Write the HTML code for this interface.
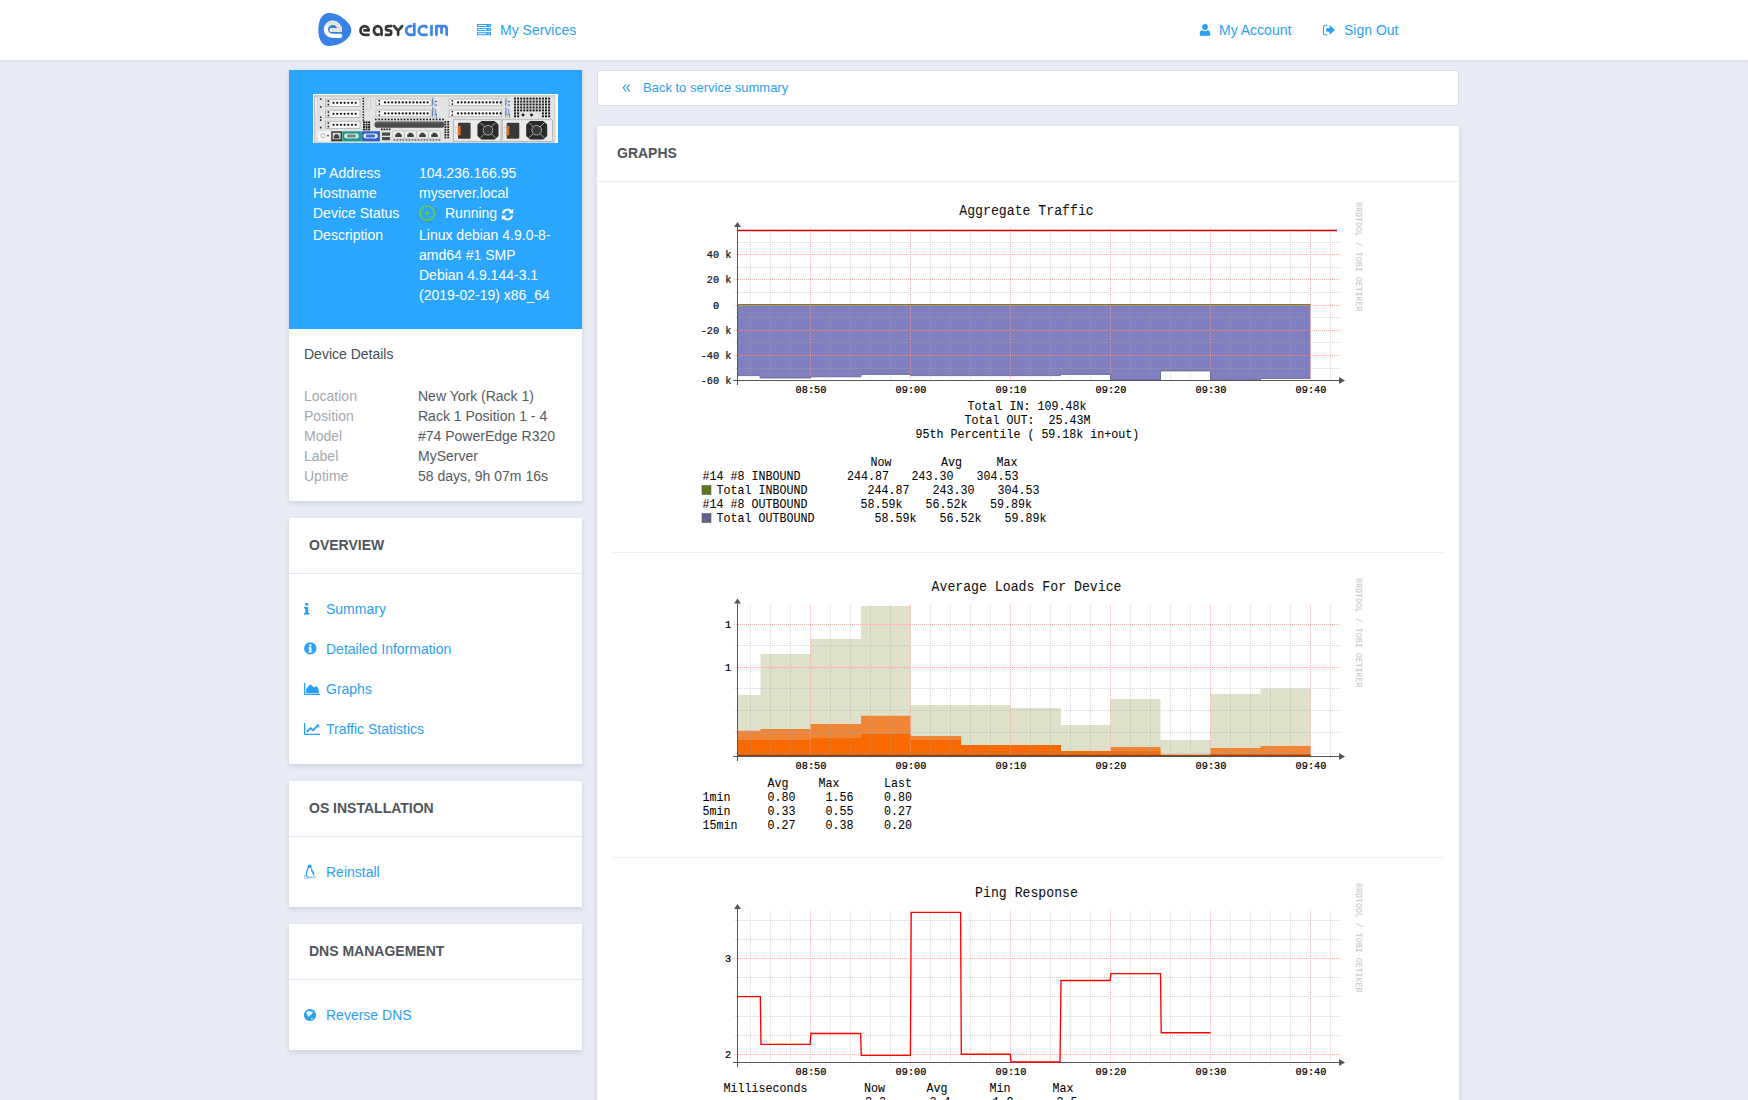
<!DOCTYPE html>
<html><head><meta charset="utf-8">
<style>
*{box-sizing:border-box;margin:0;padding:0}
html,body{width:1748px;height:1100px;overflow:hidden}
body{background:#e8ebf4;font-family:"Liberation Sans",sans-serif;font-size:14px;color:#555;position:relative}
.abs{position:absolute}
.t{position:absolute;white-space:nowrap;line-height:20px}
.hdr{position:absolute;left:0;top:0;width:1748px;height:61px;background:#fff;border-bottom:1px solid #dcdfe9;box-shadow:0 1px 2px rgba(40,50,90,.06)}
.nav{position:absolute;top:20px;font-size:14px;line-height:20px;color:#2b9ff6;white-space:nowrap}
.card{position:absolute;background:#fff;box-shadow:0 2px 5px rgba(40,50,100,.14)}
.blue{position:absolute;left:289px;top:70px;width:293px;height:259px;background:#2ba6ff;color:#fff}
.wl{color:#fff}
.ch{position:absolute;left:20px;font-weight:bold;font-size:14px;color:#50555c;line-height:20px;white-space:nowrap}
.dv{position:absolute;left:0;right:0;height:1px;background:#e4e8f0}
.lk{position:absolute;left:37px;color:#2b9ff6;font-size:14px;line-height:20px;white-space:nowrap}
.ic{position:absolute;left:15px}
.lbl{color:#a3a8b0}
.val{color:#555a60}
svg{position:absolute;overflow:visible}
</style></head><body>
<div class="hdr"></div>
<svg style="left:314px;top:10px" width="40" height="40" viewBox="0 0 40 40">
<path d="M15.5,3 C22.5,3 30,7.5 35,14 C38,18 38,22 35.5,26 C31,32.5 22.5,36 15,36 C9.5,36 6.5,32 5,26.5 C4,22 4,15.5 5.8,10.5 C7.5,5.5 11,3 15.5,3 Z" fill="#3881e5"/>
<path d="M17.5,20 H25.8 A7,7.3 0 0 0 18.8,12.7 A7,6.8 0 0 0 11.8,19.5 A7,6.3 0 0 0 18.8,25.8 H26.3" fill="none" stroke="#fff" stroke-width="4.2" stroke-linecap="round"/>
<path d="M17.5,20 H25.8 A7,7.3 0 0 0 18.8,12.7 A7,6.8 0 0 0 13.2,15.5" fill="none" stroke="#e2e2e2" stroke-width="4.2"/>
</svg>
<svg style="left:356px;top:18px" width="96" height="24" viewBox="0 0 96 24" fill="none" stroke-width="2.75" stroke-linecap="round" stroke-linejoin="round">
<g stroke="#383838">
<path d="M8.4,12.45 H12.7 A4.1,4.35 0 0 0 8.6,8.1 A4.1,4.35 0 0 0 4.5,12.45 A4.1,4.35 0 0 0 8.6,16.8 H12.5"/>
<path d="M22.8,16.5 A3.8,4.35 0 0 1 17.9,12.45 A3.8,4.35 0 0 1 21.7,8.1 A3.8,4.35 0 0 1 25.5,12.45 V16.8"/>
<path d="M35.2,8.1 H32.1 A2.1,2.175 0 0 0 32.1,12.45 H33.1 A2.1,2.175 0 0 1 33.1,16.8 H29.9"/>
<path d="M38.1,8.1 L42.1,12.8 V16.8 M46.1,8.1 L42.1,12.8"/>
</g>
<g stroke="#3a86e8">
<path d="M55.3,8.1 H54.3 A4.1,4.35 0 0 0 50.2,12.45 A4.1,4.35 0 0 0 54.3,16.8 H58.3 V6.2"/>
<path d="M70.4,9.3 A1.2,1.2 0 0 0 69.2,8.1 H66.9 A4.1,4.35 0 0 0 62.8,12.45 A4.1,4.35 0 0 0 66.9,16.8 H70.5"/>
<path d="M75.5,8.1 V16.8"/>
<path d="M80.4,16.8 V8.1 H88 A2.7,2.7 0 0 1 90.7,10.8 V16.8 M85.5,8.3 V14.8"/>
</g>
</svg>
<!-- services icon -->
<svg style="left:477px;top:24px" width="14" height="12" viewBox="0 0 14 12">
<g fill="none" stroke="#2b9ff6" stroke-width="1">
<rect x="0.5" y="0.5" width="13" height="2"/><rect x="0.5" y="4.6" width="13" height="2"/><rect x="0.5" y="8.7" width="13" height="2"/>
</g>
<g fill="#2b9ff6"><rect x="9.5" y="0.5" width="4" height="2"/><rect x="9.5" y="4.6" width="4" height="2"/><rect x="9.5" y="8.7" width="4" height="2"/></g>
<g fill="#fff"><rect x="11.6" y="1" width="1" height="1"/><rect x="11.6" y="5.1" width="1" height="1"/><rect x="11.6" y="9.2" width="1" height="1"/></g>
</svg>
<div class="nav" style="left:500px">My Services</div>
<!-- user icon -->
<svg style="left:1199px;top:24px" width="12" height="12" viewBox="0 0 12 12">
<circle cx="6" cy="3" r="2.9" fill="#2b9ff6"/>
<path d="M0.8,11.7 V9 C0.8,7.3 2,6.3 3.4,6.2 C4.2,6.9 5,7.2 6,7.2 C7,7.2 7.8,6.9 8.6,6.2 C10,6.3 11.2,7.3 11.2,9 V11.7 Z" fill="#2b9ff6"/>
</svg>
<div class="nav" style="left:1219px">My Account</div>
<!-- signout icon -->
<svg style="left:1322px;top:24px" width="14" height="12" viewBox="0 0 14 12">
<path d="M5.2,1.2 H3 C2,1.2 1.5,1.8 1.5,2.8 V9.2 C1.5,10.2 2,10.8 3,10.8 H5.2" fill="none" stroke="#2b9ff6" stroke-width="1.1"/>
<path d="M4.2,4.2 H7.6 V1 L12.9,6 L7.6,11 V7.8 H4.2 Z" fill="#2b9ff6"/>
</svg>
<div class="nav" style="left:1344px">Sign Out</div>
<div class="blue" style="box-shadow:0 2px 5px rgba(40,50,100,.14),0 0 1px rgba(40,50,90,.12)"></div>
<!-- server image -->
<svg style="left:313px;top:94px" width="245" height="49" viewBox="0 0 245 49">
<rect x="0" y="0" width="245" height="49" fill="#fff"/>
<rect x="1.5" y="1.2" width="240.5" height="47" fill="#e3e3e3" stroke="#b0b0b0" stroke-width="0.6"/>
<rect x="1.5" y="1.2" width="240.5" height="1.8" fill="#d0d0d0"/>
<rect x="2" y="3" width="2.5" height="18" fill="#f0f0f0" stroke="#bbb" stroke-width="0.4"/>
<rect x="6.9" y="4.2" width="1.6" height="1.6" fill="#222"/>
<rect x="6.9" y="12.2" width="1.6" height="1.6" fill="#222"/>
<rect x="6.9" y="22.5" width="1.6" height="1.6" fill="#222"/>
<rect x="6.9" y="25.3" width="1.6" height="1.6" fill="#222"/>
<rect x="6.9" y="32.8" width="1.6" height="1.6" fill="#222"/>
<rect x="12.5" y="5.2" width="34.5" height="7.3" fill="#f7f7f7" stroke="#9a9a9a" stroke-width="0.6"/>
<rect x="13" y="5.7" width="4.5" height="6.3" fill="#e0e0e0"/>
<circle cx="20.5" cy="8.85" r="1.1" fill="#151515"/>
<circle cx="24.2" cy="8.85" r="1.1" fill="#151515"/>
<circle cx="27.9" cy="8.85" r="1.1" fill="#151515"/>
<circle cx="31.6" cy="8.85" r="1.1" fill="#151515"/>
<circle cx="35.3" cy="8.85" r="1.1" fill="#151515"/>
<circle cx="39.0" cy="8.85" r="1.1" fill="#151515"/>
<circle cx="42.7" cy="8.85" r="1.1" fill="#151515"/>
<rect x="14.6" y="6.3" width="1.5" height="1.5" fill="#151515"/><rect x="14.6" y="9.8" width="1.5" height="1.5" fill="#151515"/>
<rect x="12.5" y="16.2" width="34.5" height="7.3" fill="#f7f7f7" stroke="#9a9a9a" stroke-width="0.6"/>
<rect x="13" y="16.7" width="4.5" height="6.3" fill="#e0e0e0"/>
<circle cx="20.5" cy="19.85" r="1.1" fill="#151515"/>
<circle cx="24.2" cy="19.85" r="1.1" fill="#151515"/>
<circle cx="27.9" cy="19.85" r="1.1" fill="#151515"/>
<circle cx="31.6" cy="19.85" r="1.1" fill="#151515"/>
<circle cx="35.3" cy="19.85" r="1.1" fill="#151515"/>
<circle cx="39.0" cy="19.85" r="1.1" fill="#151515"/>
<circle cx="42.7" cy="19.85" r="1.1" fill="#151515"/>
<rect x="14.6" y="17.3" width="1.5" height="1.5" fill="#151515"/><rect x="14.6" y="20.8" width="1.5" height="1.5" fill="#151515"/>
<rect x="12.5" y="27.2" width="34.5" height="7.3" fill="#f7f7f7" stroke="#9a9a9a" stroke-width="0.6"/>
<rect x="13" y="27.7" width="4.5" height="6.3" fill="#e0e0e0"/>
<circle cx="20.5" cy="30.85" r="1.1" fill="#151515"/>
<circle cx="24.2" cy="30.85" r="1.1" fill="#151515"/>
<circle cx="27.9" cy="30.85" r="1.1" fill="#151515"/>
<circle cx="31.6" cy="30.85" r="1.1" fill="#151515"/>
<circle cx="35.3" cy="30.85" r="1.1" fill="#151515"/>
<circle cx="39.0" cy="30.85" r="1.1" fill="#151515"/>
<circle cx="42.7" cy="30.85" r="1.1" fill="#151515"/>
<rect x="14.6" y="28.3" width="1.5" height="1.5" fill="#151515"/><rect x="14.6" y="31.8" width="1.5" height="1.5" fill="#151515"/>
<rect x="49.6" y="3.8" width="1.5" height="1.5" fill="#1a1a1a"/>
<rect x="49.6" y="6.5" width="1.5" height="1.5" fill="#1a1a1a"/>
<rect x="49.6" y="9.2" width="1.5" height="1.5" fill="#1a1a1a"/>
<rect x="49.6" y="11.9" width="1.5" height="1.5" fill="#1a1a1a"/>
<rect x="49.6" y="14.6" width="1.5" height="1.5" fill="#1a1a1a"/>
<rect x="49.6" y="17.3" width="1.5" height="1.5" fill="#1a1a1a"/>
<rect x="49.6" y="20.0" width="1.5" height="1.5" fill="#1a1a1a"/>
<rect x="49.6" y="22.7" width="1.5" height="1.5" fill="#1a1a1a"/>
<rect x="49.6" y="25.4" width="1.5" height="1.5" fill="#1a1a1a"/>
<rect x="50.0" y="27.3" width="1.9" height="1.9" fill="#1a1a1a"/>
<rect x="52.6" y="27.3" width="1.9" height="1.9" fill="#1a1a1a"/>
<rect x="55.2" y="27.3" width="1.9" height="1.9" fill="#1a1a1a"/>
<rect x="50.0" y="29.7" width="1.9" height="1.9" fill="#1a1a1a"/>
<rect x="52.6" y="29.7" width="1.9" height="1.9" fill="#1a1a1a"/>
<rect x="55.2" y="29.7" width="1.9" height="1.9" fill="#1a1a1a"/>
<rect x="50.0" y="32.1" width="1.9" height="1.9" fill="#1a1a1a"/>
<rect x="52.6" y="32.1" width="1.9" height="1.9" fill="#1a1a1a"/>
<rect x="55.2" y="32.1" width="1.9" height="1.9" fill="#1a1a1a"/>
<rect x="50.0" y="34.5" width="1.9" height="1.9" fill="#1a1a1a"/>
<rect x="52.6" y="34.5" width="1.9" height="1.9" fill="#1a1a1a"/>
<rect x="55.2" y="34.5" width="1.9" height="1.9" fill="#1a1a1a"/>
<rect x="53.5" y="3.2" width="4" height="12" fill="none" stroke="#bdbdbd" stroke-width="0.5"/>
<rect x="63.0" y="5.0" width="55.0" height="6.8" fill="#f7f7f7" stroke="#9a9a9a" stroke-width="0.6"/>
<rect x="65.6" y="6.0" width="1.5" height="1.5" fill="#151515"/><rect x="65.6" y="9.3" width="1.5" height="1.5" fill="#151515"/>
<circle cx="72.0" cy="8.40" r="1.1" fill="#151515"/>
<circle cx="75.5" cy="8.40" r="1.1" fill="#151515"/>
<circle cx="79.1" cy="8.40" r="1.1" fill="#151515"/>
<circle cx="82.7" cy="8.40" r="1.1" fill="#151515"/>
<circle cx="86.2" cy="8.40" r="1.1" fill="#151515"/>
<circle cx="89.8" cy="8.40" r="1.1" fill="#151515"/>
<circle cx="93.3" cy="8.40" r="1.1" fill="#151515"/>
<circle cx="96.8" cy="8.40" r="1.1" fill="#151515"/>
<circle cx="100.4" cy="8.40" r="1.1" fill="#151515"/>
<circle cx="104.0" cy="8.40" r="1.1" fill="#151515"/>
<circle cx="107.5" cy="8.40" r="1.1" fill="#151515"/>
<circle cx="111.0" cy="8.40" r="1.1" fill="#151515"/>
<circle cx="114.6" cy="8.40" r="1.1" fill="#151515"/>
<rect x="63.0" y="16.0" width="55.0" height="6.8" fill="#f7f7f7" stroke="#9a9a9a" stroke-width="0.6"/>
<rect x="65.6" y="17.0" width="1.5" height="1.5" fill="#151515"/><rect x="65.6" y="20.3" width="1.5" height="1.5" fill="#151515"/>
<circle cx="72.0" cy="19.40" r="1.1" fill="#151515"/>
<circle cx="75.5" cy="19.40" r="1.1" fill="#151515"/>
<circle cx="79.1" cy="19.40" r="1.1" fill="#151515"/>
<circle cx="82.7" cy="19.40" r="1.1" fill="#151515"/>
<circle cx="86.2" cy="19.40" r="1.1" fill="#151515"/>
<circle cx="89.8" cy="19.40" r="1.1" fill="#151515"/>
<circle cx="93.3" cy="19.40" r="1.1" fill="#151515"/>
<circle cx="96.8" cy="19.40" r="1.1" fill="#151515"/>
<circle cx="100.4" cy="19.40" r="1.1" fill="#151515"/>
<circle cx="104.0" cy="19.40" r="1.1" fill="#151515"/>
<circle cx="107.5" cy="19.40" r="1.1" fill="#151515"/>
<circle cx="111.0" cy="19.40" r="1.1" fill="#151515"/>
<circle cx="114.6" cy="19.40" r="1.1" fill="#151515"/>
<rect x="136.0" y="5.0" width="52.5" height="6.8" fill="#f7f7f7" stroke="#9a9a9a" stroke-width="0.6"/>
<rect x="138.6" y="6.0" width="1.5" height="1.5" fill="#151515"/><rect x="138.6" y="9.3" width="1.5" height="1.5" fill="#151515"/>
<circle cx="145.0" cy="8.40" r="1.1" fill="#151515"/>
<circle cx="148.6" cy="8.40" r="1.1" fill="#151515"/>
<circle cx="152.1" cy="8.40" r="1.1" fill="#151515"/>
<circle cx="155.7" cy="8.40" r="1.1" fill="#151515"/>
<circle cx="159.2" cy="8.40" r="1.1" fill="#151515"/>
<circle cx="162.8" cy="8.40" r="1.1" fill="#151515"/>
<circle cx="166.3" cy="8.40" r="1.1" fill="#151515"/>
<circle cx="169.8" cy="8.40" r="1.1" fill="#151515"/>
<circle cx="173.4" cy="8.40" r="1.1" fill="#151515"/>
<circle cx="176.9" cy="8.40" r="1.1" fill="#151515"/>
<circle cx="180.5" cy="8.40" r="1.1" fill="#151515"/>
<circle cx="184.1" cy="8.40" r="1.1" fill="#151515"/>
<circle cx="187.6" cy="8.40" r="1.1" fill="#151515"/>
<rect x="136.0" y="16.0" width="52.5" height="6.8" fill="#f7f7f7" stroke="#9a9a9a" stroke-width="0.6"/>
<rect x="138.6" y="17.0" width="1.5" height="1.5" fill="#151515"/><rect x="138.6" y="20.3" width="1.5" height="1.5" fill="#151515"/>
<circle cx="145.0" cy="19.40" r="1.1" fill="#151515"/>
<circle cx="148.6" cy="19.40" r="1.1" fill="#151515"/>
<circle cx="152.1" cy="19.40" r="1.1" fill="#151515"/>
<circle cx="155.7" cy="19.40" r="1.1" fill="#151515"/>
<circle cx="159.2" cy="19.40" r="1.1" fill="#151515"/>
<circle cx="162.8" cy="19.40" r="1.1" fill="#151515"/>
<circle cx="166.3" cy="19.40" r="1.1" fill="#151515"/>
<circle cx="169.8" cy="19.40" r="1.1" fill="#151515"/>
<circle cx="173.4" cy="19.40" r="1.1" fill="#151515"/>
<circle cx="176.9" cy="19.40" r="1.1" fill="#151515"/>
<circle cx="180.5" cy="19.40" r="1.1" fill="#151515"/>
<circle cx="184.1" cy="19.40" r="1.1" fill="#151515"/>
<circle cx="187.6" cy="19.40" r="1.1" fill="#151515"/>
<rect x="119.2" y="3.5" width="2.2" height="20.5" fill="#f2f2f2" stroke="#aaa" stroke-width="0.4"/>
<rect x="119.4" y="4.5" width="0.9" height="7" fill="#2a55b0"/><rect x="119.4" y="13.5" width="0.9" height="9" fill="#2a55b0"/>
<rect x="122.2" y="7" width="1.6" height="1.2" fill="#2a55b0"/><rect x="122.2" y="10.5" width="1.6" height="1.2" fill="#2a55b0"/><rect x="122.2" y="20" width="1.6" height="1.2" fill="#2a55b0"/>
<path d="M122.5,15 L123.5,24" stroke="#4a88d8" stroke-width="0.9"/>
<rect x="192.3" y="3.5" width="2.2" height="20.5" fill="#f2f2f2" stroke="#aaa" stroke-width="0.4"/>
<rect x="192.5" y="4.5" width="0.9" height="7" fill="#2a55b0"/><rect x="192.5" y="13.5" width="0.9" height="9" fill="#2a55b0"/>
<rect x="195.3" y="7" width="1.6" height="1.2" fill="#2a55b0"/><rect x="195.3" y="10.5" width="1.6" height="1.2" fill="#2a55b0"/><rect x="195.3" y="20" width="1.6" height="1.2" fill="#2a55b0"/>
<path d="M195.6,15 L196.6,24" stroke="#4a88d8" stroke-width="0.9"/>
<rect x="201.0" y="3.6" width="2" height="2" fill="#1c1c1c"/>
<rect x="204.1" y="3.6" width="2" height="2" fill="#1c1c1c"/>
<rect x="207.2" y="3.6" width="2" height="2" fill="#1c1c1c"/>
<rect x="210.3" y="3.6" width="2" height="2" fill="#1c1c1c"/>
<rect x="213.4" y="3.6" width="2" height="2" fill="#1c1c1c"/>
<rect x="216.5" y="3.6" width="2" height="2" fill="#1c1c1c"/>
<rect x="219.6" y="3.6" width="2" height="2" fill="#1c1c1c"/>
<rect x="222.7" y="3.6" width="2" height="2" fill="#1c1c1c"/>
<rect x="225.8" y="3.6" width="2" height="2" fill="#1c1c1c"/>
<rect x="228.9" y="3.6" width="2" height="2" fill="#1c1c1c"/>
<rect x="232.0" y="3.6" width="2" height="2" fill="#1c1c1c"/>
<rect x="235.1" y="3.6" width="2" height="2" fill="#1c1c1c"/>
<rect x="201.0" y="6.6" width="2" height="2" fill="#1c1c1c"/>
<rect x="204.1" y="6.6" width="2" height="2" fill="#1c1c1c"/>
<rect x="207.2" y="6.6" width="2" height="2" fill="#1c1c1c"/>
<rect x="210.3" y="6.6" width="2" height="2" fill="#1c1c1c"/>
<rect x="213.4" y="6.6" width="2" height="2" fill="#1c1c1c"/>
<rect x="216.5" y="6.6" width="2" height="2" fill="#1c1c1c"/>
<rect x="219.6" y="6.6" width="2" height="2" fill="#1c1c1c"/>
<rect x="222.7" y="6.6" width="2" height="2" fill="#1c1c1c"/>
<rect x="225.8" y="6.6" width="2" height="2" fill="#1c1c1c"/>
<rect x="228.9" y="6.6" width="2" height="2" fill="#1c1c1c"/>
<rect x="232.0" y="6.6" width="2" height="2" fill="#1c1c1c"/>
<rect x="235.1" y="6.6" width="2" height="2" fill="#1c1c1c"/>
<rect x="201.0" y="9.5" width="2" height="2" fill="#1c1c1c"/>
<rect x="204.1" y="9.5" width="2" height="2" fill="#1c1c1c"/>
<rect x="207.2" y="9.5" width="2" height="2" fill="#1c1c1c"/>
<rect x="210.3" y="9.5" width="2" height="2" fill="#1c1c1c"/>
<rect x="213.4" y="9.5" width="2" height="2" fill="#1c1c1c"/>
<rect x="216.5" y="9.5" width="2" height="2" fill="#1c1c1c"/>
<rect x="219.6" y="9.5" width="2" height="2" fill="#1c1c1c"/>
<rect x="222.7" y="9.5" width="2" height="2" fill="#1c1c1c"/>
<rect x="225.8" y="9.5" width="2" height="2" fill="#1c1c1c"/>
<rect x="228.9" y="9.5" width="2" height="2" fill="#1c1c1c"/>
<rect x="232.0" y="9.5" width="2" height="2" fill="#1c1c1c"/>
<rect x="235.1" y="9.5" width="2" height="2" fill="#1c1c1c"/>
<rect x="201.0" y="12.5" width="2" height="2" fill="#1c1c1c"/>
<rect x="204.1" y="12.5" width="2" height="2" fill="#1c1c1c"/>
<rect x="207.2" y="12.5" width="2" height="2" fill="#1c1c1c"/>
<rect x="210.3" y="12.5" width="2" height="2" fill="#1c1c1c"/>
<rect x="213.4" y="12.5" width="2" height="2" fill="#1c1c1c"/>
<rect x="216.5" y="12.5" width="2" height="2" fill="#1c1c1c"/>
<rect x="219.6" y="12.5" width="2" height="2" fill="#1c1c1c"/>
<rect x="222.7" y="12.5" width="2" height="2" fill="#1c1c1c"/>
<rect x="225.8" y="12.5" width="2" height="2" fill="#1c1c1c"/>
<rect x="228.9" y="12.5" width="2" height="2" fill="#1c1c1c"/>
<rect x="232.0" y="12.5" width="2" height="2" fill="#1c1c1c"/>
<rect x="235.1" y="12.5" width="2" height="2" fill="#1c1c1c"/>
<rect x="201.0" y="15.4" width="2" height="2" fill="#1c1c1c"/>
<rect x="204.1" y="15.4" width="2" height="2" fill="#1c1c1c"/>
<rect x="207.2" y="15.4" width="2" height="2" fill="#1c1c1c"/>
<rect x="210.3" y="15.4" width="2" height="2" fill="#1c1c1c"/>
<rect x="213.4" y="15.4" width="2" height="2" fill="#1c1c1c"/>
<rect x="216.5" y="15.4" width="2" height="2" fill="#1c1c1c"/>
<rect x="219.6" y="15.4" width="2" height="2" fill="#1c1c1c"/>
<rect x="222.7" y="15.4" width="2" height="2" fill="#1c1c1c"/>
<rect x="225.8" y="15.4" width="2" height="2" fill="#1c1c1c"/>
<rect x="228.9" y="15.4" width="2" height="2" fill="#1c1c1c"/>
<rect x="232.0" y="15.4" width="2" height="2" fill="#1c1c1c"/>
<rect x="235.1" y="15.4" width="2" height="2" fill="#1c1c1c"/>
<rect x="201.0" y="18.4" width="2" height="2" fill="#1c1c1c"/>
<rect x="204.1" y="18.4" width="2" height="2" fill="#1c1c1c"/>
<rect x="228.9" y="18.4" width="2" height="2" fill="#1c1c1c"/>
<rect x="232.0" y="18.4" width="2" height="2" fill="#1c1c1c"/>
<rect x="235.1" y="18.4" width="2" height="2" fill="#1c1c1c"/>
<rect x="201.0" y="21.3" width="2" height="2" fill="#1c1c1c"/>
<rect x="204.1" y="21.3" width="2" height="2" fill="#1c1c1c"/>
<rect x="228.9" y="21.3" width="2" height="2" fill="#1c1c1c"/>
<rect x="232.0" y="21.3" width="2" height="2" fill="#1c1c1c"/>
<rect x="235.1" y="21.3" width="2" height="2" fill="#1c1c1c"/>
<circle cx="210" cy="21" r="1.4" fill="#1c1c1c"/><circle cx="218.5" cy="21" r="1.4" fill="#1c1c1c"/>
<rect x="62.0" y="24.6" width="1.7" height="1.7" fill="#1c1c1c"/>
<rect x="65.2" y="24.6" width="1.7" height="1.7" fill="#1c1c1c"/>
<rect x="68.4" y="24.6" width="1.7" height="1.7" fill="#1c1c1c"/>
<rect x="71.6" y="24.6" width="1.7" height="1.7" fill="#1c1c1c"/>
<rect x="74.8" y="24.6" width="1.7" height="1.7" fill="#1c1c1c"/>
<rect x="78.0" y="24.6" width="1.7" height="1.7" fill="#1c1c1c"/>
<rect x="81.2" y="24.6" width="1.7" height="1.7" fill="#1c1c1c"/>
<rect x="84.4" y="24.6" width="1.7" height="1.7" fill="#1c1c1c"/>
<rect x="87.6" y="24.6" width="1.7" height="1.7" fill="#1c1c1c"/>
<rect x="90.8" y="24.6" width="1.7" height="1.7" fill="#1c1c1c"/>
<rect x="94.0" y="24.6" width="1.7" height="1.7" fill="#1c1c1c"/>
<rect x="97.2" y="24.6" width="1.7" height="1.7" fill="#1c1c1c"/>
<rect x="100.4" y="24.6" width="1.7" height="1.7" fill="#1c1c1c"/>
<rect x="103.6" y="24.6" width="1.7" height="1.7" fill="#1c1c1c"/>
<rect x="106.8" y="24.6" width="1.7" height="1.7" fill="#1c1c1c"/>
<rect x="110.0" y="24.6" width="1.7" height="1.7" fill="#1c1c1c"/>
<rect x="113.2" y="24.6" width="1.7" height="1.7" fill="#1c1c1c"/>
<rect x="116.4" y="24.6" width="1.7" height="1.7" fill="#1c1c1c"/>
<rect x="119.6" y="24.6" width="1.7" height="1.7" fill="#1c1c1c"/>
<rect x="122.8" y="24.6" width="1.7" height="1.7" fill="#1c1c1c"/>
<rect x="126.0" y="24.6" width="1.7" height="1.7" fill="#1c1c1c"/>
<rect x="129.2" y="24.6" width="1.7" height="1.7" fill="#1c1c1c"/>
<rect x="68.0" y="34.5" width="1.7" height="1.7" fill="#1c1c1c"/>
<rect x="70.6" y="34.5" width="1.7" height="1.7" fill="#1c1c1c"/>
<rect x="73.2" y="34.5" width="1.7" height="1.7" fill="#1c1c1c"/>
<rect x="75.8" y="34.5" width="1.7" height="1.7" fill="#1c1c1c"/>
<rect x="61.5" y="27.6" width="70" height="6.2" rx="3.1" fill="#4a4a4a"/>
<rect x="62" y="28.2" width="69" height="1.2" fill="#5e5e5e"/>
<rect x="4.8" y="37.3" width="12.6" height="10" fill="#f8f8f8"/>
<circle cx="10" cy="41.6" r="2.1" fill="none" stroke="#9a9a9a" stroke-width="0.7"/><circle cx="15" cy="41.6" r="0.9" fill="#333"/>
<rect x="18.2" y="37.3" width="10.8" height="10" fill="#3a3a3a"/>
<rect x="19.6" y="38.8" width="8" height="6.5" fill="#d8d8d8"/><path d="M20.8,44.5 V41.5 H22 V40.3 H25 V41.5 H26.3 V44.5 Z" fill="#444"/>
<rect x="29.3" y="37.3" width="18.6" height="10" fill="#1a9888"/>
<path d="M31.2,42 C31.2,40 32.5,39.6 34,39.6 H43 C44.5,39.6 45.8,40 45.8,42 C45.8,44 44.5,44.4 43,44.4 H34 C32.5,44.4 31.2,44 31.2,42 Z" fill="#e8e8e8"/><rect x="34" y="40.4" width="9" height="3.2" rx="1" fill="#6b8e7e"/>
<rect x="48.3" y="37.3" width="18.6" height="10" fill="#2b5fc2"/>
<path d="M50.2,42 C50.2,40 51.5,39.6 53,39.6 H62 C63.5,39.6 64.8,40 64.8,42 C64.8,44 63.5,44.4 62,44.4 H53 C51.5,44.4 50.2,44 50.2,42 Z" fill="#e8e8e8"/><rect x="53" y="40.4" width="9" height="3.2" rx="1" fill="#3e6ccc"/>
<rect x="69" y="38.5" width="8" height="3.2" fill="#4a4a4a"/><rect x="69" y="43" width="8" height="3.2" fill="#4a4a4a"/>
<rect x="79.3" y="36.6" width="49" height="7.8" fill="#d9d9d9"/>
<rect x="80.0" y="37" width="11" height="7" fill="#f4f4f4" stroke="#a8a8a8" stroke-width="0.4"/>
<path d="M82.2,43 V40.2 H83.6 V38.8 H87.4 V40.2 H88.8 V43 Z" fill="#3e3e3e"/>
<rect x="92.0" y="37" width="11" height="7" fill="#f4f4f4" stroke="#a8a8a8" stroke-width="0.4"/>
<path d="M94.2,43 V40.2 H95.6 V38.8 H99.4 V40.2 H100.8 V43 Z" fill="#3e3e3e"/>
<rect x="104.0" y="37" width="11" height="7" fill="#f4f4f4" stroke="#a8a8a8" stroke-width="0.4"/>
<path d="M106.2,43 V40.2 H107.6 V38.8 H111.4 V40.2 H112.8 V43 Z" fill="#3e3e3e"/>
<rect x="116.0" y="37" width="11" height="7" fill="#f4f4f4" stroke="#a8a8a8" stroke-width="0.4"/>
<path d="M118.2,43 V40.2 H119.6 V38.8 H123.4 V40.2 H124.8 V43 Z" fill="#3e3e3e"/>
<rect x="80.5" y="45.3" width="1.8" height="1.3" fill="#555"/>
<rect x="83.5" y="45.3" width="1.8" height="1.3" fill="#555"/>
<rect x="86.5" y="45.3" width="1.8" height="1.3" fill="#555"/>
<rect x="89.5" y="45.3" width="1.8" height="1.3" fill="#555"/>
<rect x="92.5" y="45.3" width="1.8" height="1.3" fill="#555"/>
<rect x="95.5" y="45.3" width="1.8" height="1.3" fill="#555"/>
<rect x="98.5" y="45.3" width="1.8" height="1.3" fill="#555"/>
<rect x="101.5" y="45.3" width="1.8" height="1.3" fill="#555"/>
<rect x="104.5" y="45.3" width="1.8" height="1.3" fill="#555"/>
<rect x="107.5" y="45.3" width="1.8" height="1.3" fill="#555"/>
<rect x="110.5" y="45.3" width="1.8" height="1.3" fill="#555"/>
<rect x="113.5" y="45.3" width="1.8" height="1.3" fill="#555"/>
<rect x="116.5" y="45.3" width="1.8" height="1.3" fill="#555"/>
<rect x="119.5" y="45.3" width="1.8" height="1.3" fill="#555"/>
<rect x="122.5" y="45.3" width="1.8" height="1.3" fill="#555"/>
<rect x="125.5" y="45.3" width="1.8" height="1.3" fill="#555"/>
<rect x="131.5" y="27.0" width="1.8" height="1.8" fill="#1c1c1c"/>
<rect x="134.3" y="27.0" width="1.8" height="1.8" fill="#1c1c1c"/>
<rect x="131.5" y="29.6" width="1.8" height="1.8" fill="#1c1c1c"/>
<rect x="134.3" y="29.6" width="1.8" height="1.8" fill="#1c1c1c"/>
<rect x="131.5" y="32.2" width="1.8" height="1.8" fill="#1c1c1c"/>
<rect x="134.3" y="32.2" width="1.8" height="1.8" fill="#1c1c1c"/>
<rect x="131.5" y="34.8" width="1.8" height="1.8" fill="#1c1c1c"/>
<rect x="134.3" y="34.8" width="1.8" height="1.8" fill="#1c1c1c"/>
<rect x="131.5" y="37.4" width="1.8" height="1.8" fill="#1c1c1c"/>
<rect x="134.3" y="37.4" width="1.8" height="1.8" fill="#1c1c1c"/>
<rect x="131.5" y="40.0" width="1.8" height="1.8" fill="#1c1c1c"/>
<rect x="134.3" y="40.0" width="1.8" height="1.8" fill="#1c1c1c"/>
<rect x="131.5" y="42.6" width="1.8" height="1.8" fill="#1c1c1c"/>
<rect x="134.3" y="42.6" width="1.8" height="1.8" fill="#1c1c1c"/>
<rect x="140.5" y="25.8" width="47.5" height="21.4" fill="#ececec" stroke="#999" stroke-width="0.6"/>
<rect x="145.0" y="28.7" width="12.6" height="16" rx="1" fill="#383838"/>
<rect x="144.8" y="31.8" width="2.8" height="9.5" fill="#e0701e"/>
<rect x="142.4" y="33" width="2.2" height="6" fill="#f7f7f7" stroke="#888" stroke-width="0.3"/>
<path d="M168.5,27 H181.5 L185.5,30.5 V42 L181.5,45.6 H168.5 L164.5,42 V30.5 Z" fill="#2a2a2a"/>
<circle cx="175.0" cy="36.3" r="4.8" fill="#3a3a3a" stroke="#d4d4d4" stroke-width="0.7"/>
<path d="M167.6,28.9L171.6,32.9M178.4,39.7L182.4,43.7M182.4,28.9L178.4,32.9M171.6,39.7L167.6,43.7" stroke="#d4d4d4" stroke-width="0.7"/>
<rect x="189.2" y="25.8" width="50.5" height="21.4" fill="#ececec" stroke="#999" stroke-width="0.6"/>
<rect x="193.7" y="28.7" width="12.6" height="16" rx="1" fill="#383838"/>
<rect x="193.5" y="31.8" width="2.8" height="9.5" fill="#e0701e"/>
<rect x="191.1" y="33" width="2.2" height="6" fill="#f7f7f7" stroke="#888" stroke-width="0.3"/>
<path d="M217.2,27 H230.2 L234.2,30.5 V42 L230.2,45.6 H217.2 L213.2,42 V30.5 Z" fill="#2a2a2a"/>
<circle cx="223.7" cy="36.3" r="4.8" fill="#3a3a3a" stroke="#d4d4d4" stroke-width="0.7"/>
<path d="M216.3,28.9L220.3,32.9M227.1,39.7L231.1,43.7M231.1,28.9L227.1,32.9M220.3,39.7L216.3,43.7" stroke="#d4d4d4" stroke-width="0.7"/>
</svg>

<div class="t wl" style="left:313px;top:163px">IP Address</div><div class="t wl" style="left:419px;top:163px">104.236.166.95</div>
<div class="t wl" style="left:313px;top:183px">Hostname</div><div class="t wl" style="left:419px;top:183px">myserver.local</div>
<div class="t wl" style="left:313px;top:203px">Device Status</div>
<svg style="left:419px;top:205px" width="17" height="17" viewBox="0 0 17 17"><circle cx="8.1" cy="8.1" r="7.1" fill="none" stroke="#68c84c" stroke-width="1.7"/><path d="M6.4,5.3 L10.9,8.1 L6.4,10.9 Z" fill="#68c84c"/></svg>
<div class="t wl" style="left:445px;top:203px">Running</div>
<svg style="left:501px;top:208px" width="13" height="13" viewBox="0 0 13 13"><path d="M2,5.5 A4.6,4.6 0 0 1 10.3,3.6" fill="none" stroke="#fff" stroke-width="2"/><path d="M12.2,0.8 V5.6 H7.4 Z" fill="#fff"/><path d="M11,7.5 A4.6,4.6 0 0 1 2.7,9.4" fill="none" stroke="#fff" stroke-width="2"/><path d="M0.8,12.2 V7.4 H5.6 Z" fill="#fff"/></svg>
<div class="t wl" style="left:313px;top:225px">Description</div>
<div class="t wl" style="left:419px;top:225px">Linux debian 4.9.0-8-</div>
<div class="t wl" style="left:419px;top:245px">amd64 #1 SMP</div>
<div class="t wl" style="left:419px;top:265px">Debian 4.9.144-3.1</div>
<div class="t wl" style="left:419px;top:285px">(2019-02-19) x86_64</div>

<div class="card" style="left:289px;top:329px;width:293px;height:172px"></div>
<div class="t" style="left:304px;top:344px;color:#474b52">Device Details</div>
<div class="t lbl" style="left:304px;top:386px">Location</div><div class="t val" style="left:418px;top:386px">New York (Rack 1)</div>
<div class="t lbl" style="left:304px;top:406px">Position</div><div class="t val" style="left:418px;top:406px">Rack 1 Position 1 - 4</div>
<div class="t lbl" style="left:304px;top:426px">Model</div><div class="t val" style="left:418px;top:426px">#74 PowerEdge R320</div>
<div class="t lbl" style="left:304px;top:446px">Label</div><div class="t val" style="left:418px;top:446px">MyServer</div>
<div class="t lbl" style="left:304px;top:466px">Uptime</div><div class="t val" style="left:418px;top:466px">58 days, 9h 07m 16s</div>

<div class="card" style="left:289px;top:518px;width:293px;height:246px">
<div class="ch" style="top:17px">OVERVIEW</div>
<div class="dv" style="top:55px"></div>
<svg class="ic" style="top:85px" width="6" height="12" viewBox="0 0 6 12"><rect x="1.2" y="0" width="3" height="2.6" fill="#2b9ff6"/><path d="M0,4 H4.2 V10 H5.5 V11.4 H0 V10 H1.2 V5.4 H0 Z" fill="#2b9ff6"/></svg>
<div class="lk" style="top:81px">Summary</div>
<svg class="ic" style="top:124px" width="13" height="13" viewBox="0 0 13 13"><circle cx="6.3" cy="6.4" r="6.2" fill="#2b9ff6"/><rect x="5.2" y="2.4" width="2.3" height="2" fill="#fff"/><path d="M4.2,5.3 H7.5 V9.5 H8.4 V10.6 H4.2 V9.5 H5.2 V6.4 H4.2 Z" fill="#fff"/></svg>
<div class="lk" style="top:121px">Detailed Information</div>
<svg class="ic" style="top:165px" width="17" height="12" viewBox="0 0 17 12"><path d="M0.7,0 V11.3 H16" fill="none" stroke="#2b9ff6" stroke-width="1.3"/><path d="M2.2,10.2 V5.8 L6.3,1.2 L10.2,4.5 L13.1,3.2 L14.8,7 V10.2 Z" fill="#2b9ff6"/></svg>
<div class="lk" style="top:161px">Graphs</div>
<svg class="ic" style="top:205px" width="17" height="12" viewBox="0 0 17 12"><path d="M0.7,0 V11.3 H16" fill="none" stroke="#2b9ff6" stroke-width="1.3"/><path d="M2.8,9 L6.5,5.2 L9,7.2 L13.5,2.8" fill="none" stroke="#2b9ff6" stroke-width="1.8"/><path d="M11.8,1.5 H15.2 V5 Z" fill="#2b9ff6"/></svg>
<div class="lk" style="top:201px">Traffic Statistics</div>
</div>

<div class="card" style="left:289px;top:781px;width:293px;height:126px">
<div class="ch" style="top:17px">OS INSTALLATION</div>
<div class="dv" style="top:55px"></div>
<svg class="ic" style="left:11px;top:79px" width="20" height="24" viewBox="0 0 20 24">
<ellipse cx="9.6" cy="6.4" rx="2.1" ry="1.8" fill="#2b9ff6"/>
<path d="M8.3,7.5 C8,9.5 6.2,11.5 6.2,14.3 C6.2,15.8 7.2,16.8 8.5,17.2" fill="none" stroke="#2b9ff6" stroke-width="1.3"/>
<path d="M11.2,6.5 C11.6,9 12.8,10.2 13.8,12 C14.6,13.4 14.5,15 13.6,15.8 C12.8,14 11.8,12 11,10.5 Z" fill="#2b9ff6"/>
<path d="M4.5,15.5 C5.5,15.4 7.2,16.5 8,17.8 C6.5,18.6 4.8,18.6 4.2,17.8 Z M12.4,17.8 C13.2,16.5 14.8,15.8 15.8,16.3 C15.6,17.6 14,18.6 12.4,17.8 Z" fill="none" stroke="#7cc4fa" stroke-width="0.9"/>
<path d="M8.5,17.4 H12.2" stroke="#5bb4f8" stroke-width="1.1"/>
</svg>
<div class="lk" style="top:81px">Reinstall</div>
</div>

<div class="card" style="left:289px;top:924px;width:293px;height:126px">
<div class="ch" style="top:17px">DNS MANAGEMENT</div>
<div class="dv" style="top:55px"></div>
<svg class="ic" style="left:11px;top:80px" width="20" height="22" viewBox="0 0 20 22">
<circle cx="10" cy="11" r="6.1" fill="#2b9ff6"/>
<path d="M6,8.3 C7.5,7.2 9,6.8 10.3,7 C10.3,8 11,8.3 11.5,7.6 C12.2,7.8 12.8,8.2 13.1,8.6 C12,10 10.8,11 9.8,11.6 C9.3,12 9.2,12.5 8.6,12.9 C7.5,11.5 6.5,10 6,8.3 Z" fill="#fff"/>
<path d="M11.2,14 C12,13.8 12.8,14 13,14.3 C12.5,15.2 11.8,15.6 11.3,15.6 Z" fill="#fff"/>
</svg>
<div class="lk" style="top:81px">Reverse DNS</div>
</div>
<div class="abs" style="left:597px;top:70px;width:862px;height:36px;background:#fff;border:1px solid #dcdcdc"></div>
<svg style="left:622px;top:83px" width="9" height="10" viewBox="0 0 9 10"><path d="M4.2,1.3 L1.2,4.8 L4.2,8.3 M7.8,1.3 L4.8,4.8 L7.8,8.3" fill="none" stroke="#2b9ff6" stroke-width="1.1"/></svg>
<div class="t" style="left:643px;top:78px;font-size:13px;color:#2b9ff6">Back to service summary</div>
<div class="card" style="left:597px;top:126px;width:862px;height:1000px">
<div class="ch" style="top:17px">GRAPHS</div>
<div class="dv" style="top:55px;background:#e9ecf1"></div>
<div class="abs" style="left:15px;width:832px;top:426px;height:1px;background:#efefef"></div>
<div class="abs" style="left:15px;width:832px;top:731px;height:1px;background:#efefef"></div>
</div>
<svg style="left:0;top:0" width="1748" height="1100" viewBox="0 0 1748 1100" font-family="Liberation Mono, monospace">
<text transform="translate(1026.5,214.5) scale(1,1.1)" font-size="13.2" fill="#111" stroke="#111" stroke-width="0.05" text-anchor="middle" xml:space="preserve">Aggregate Traffic</text>
<path d="M737.5,305H1310.5V378.4H1260.5V379.8H1210.5V371.0H1160.5V380.0H1110.5V374.4H1060.5V375.6H1010.5V375.6H910.5V374.4H861.0V376.8H810.5V378.0H760.0V375.6H737.5Z" fill="#8080c0"/>
<path d="M750.5,228.0V382.0M770.5,228.0V382.0M790.5,228.0V382.0M830.5,228.0V382.0M850.5,228.0V382.0M870.5,228.0V382.0M890.5,228.0V382.0M930.5,228.0V382.0M950.5,228.0V382.0M970.5,228.0V382.0M990.5,228.0V382.0M1030.5,228.0V382.0M1050.5,228.0V382.0M1070.5,228.0V382.0M1090.5,228.0V382.0M1130.5,228.0V382.0M1150.5,228.0V382.0M1170.5,228.0V382.0M1190.5,228.0V382.0M1230.5,228.0V382.0M1250.5,228.0V382.0M1270.5,228.0V382.0M1290.5,228.0V382.0M1330.5,228.0V382.0" stroke="rgba(166,166,166,0.45)" stroke-width="1" stroke-dasharray="1,1" shape-rendering="crispEdges"/>
<path d="M734.0,242.5H1340.0M734.0,267.5H1340.0M734.0,292.5H1340.0M734.0,317.5H1340.0M734.0,342.5H1340.0M734.0,368.5H1340.0" stroke="rgba(166,166,166,0.45)" stroke-width="1" stroke-dasharray="1,1" shape-rendering="crispEdges"/>
<path d="M810.5,228.0V382.0M910.5,228.0V382.0M1010.5,228.0V382.0M1110.5,228.0V382.0M1210.5,228.0V382.0M1310.5,228.0V382.0M734.0,254.5H1340.0M734.0,279.5H1340.0M734.0,305.5H1340.0M734.0,330.5H1340.0M734.0,355.5H1340.0" stroke="rgba(255,150,150,0.75)" stroke-width="1" stroke-dasharray="1,1" shape-rendering="crispEdges"/>
<path d="M737.5,375.6V375.6H760.0V378.0H810.5V376.8H861.0V374.4H910.5V375.6H1010.5V375.6H1060.5V374.4H1110.5V380.0H1160.5V371.0H1210.5V379.8H1260.5V378.4H1310.5" fill="none" stroke="#60608a" stroke-width="0.8"/>
<path d="M737.5,230.5H1337" stroke="#c00000" stroke-width="1.6"/>
<path d="M737.5,304.5H1310.5" stroke="#5a8a1a" stroke-width="1"/>
<path d="M737.5,225.0V384.5 M733,380.5H1340" stroke="#555" stroke-width="1" shape-rendering="crispEdges"/>
<path d="M734.0,227.0 L737.5,222.0 L741.0,227.0 Z" fill="#555"/>
<path d="M1339,377.0 L1345,380.5 L1339,384.0 Z" fill="#555"/>
<text transform="translate(731.5,258.0) scale(1,1.1)" font-size="10.3" fill="#111" stroke="#111" stroke-width="0.22" text-anchor="end" xml:space="preserve">40 k</text>
<text transform="translate(731.5,283.0) scale(1,1.1)" font-size="10.3" fill="#111" stroke="#111" stroke-width="0.22" text-anchor="end" xml:space="preserve">20 k</text>
<text transform="translate(731.5,333.5) scale(1,1.1)" font-size="10.3" fill="#111" stroke="#111" stroke-width="0.22" text-anchor="end" xml:space="preserve">-20 k</text>
<text transform="translate(731.5,358.5) scale(1,1.1)" font-size="10.3" fill="#111" stroke="#111" stroke-width="0.22" text-anchor="end" xml:space="preserve">-40 k</text>
<text transform="translate(731.5,383.5) scale(1,1.1)" font-size="10.3" fill="#111" stroke="#111" stroke-width="0.22" text-anchor="end" xml:space="preserve">-60 k</text>
<text transform="translate(713.0,308.5) scale(1,1.1)" font-size="10.3" fill="#000" stroke="#000" stroke-width="0.22" text-anchor="start" xml:space="preserve">0</text>
<text transform="translate(811.0,393.0) scale(1,1.1)" font-size="10.3" fill="#000" stroke="#000" stroke-width="0.22" text-anchor="middle" xml:space="preserve">08:50</text>
<text transform="translate(911.0,393.0) scale(1,1.1)" font-size="10.3" fill="#000" stroke="#000" stroke-width="0.22" text-anchor="middle" xml:space="preserve">09:00</text>
<text transform="translate(1011.0,393.0) scale(1,1.1)" font-size="10.3" fill="#000" stroke="#000" stroke-width="0.22" text-anchor="middle" xml:space="preserve">09:10</text>
<text transform="translate(1111.0,393.0) scale(1,1.1)" font-size="10.3" fill="#000" stroke="#000" stroke-width="0.22" text-anchor="middle" xml:space="preserve">09:20</text>
<text transform="translate(1211.0,393.0) scale(1,1.1)" font-size="10.3" fill="#000" stroke="#000" stroke-width="0.22" text-anchor="middle" xml:space="preserve">09:30</text>
<text transform="translate(1311.0,393.0) scale(1,1.1)" font-size="10.3" fill="#000" stroke="#000" stroke-width="0.22" text-anchor="middle" xml:space="preserve">09:40</text>
<text transform="translate(1356,202.0) rotate(90)" font-size="8.3" fill="#c4c4c4">RRDTOOL / TOBI OETIKER</text>
<text transform="translate(967.5,410.0) scale(1,1.1)" font-size="11.67" fill="#000" stroke="#000" stroke-width="0.05" text-anchor="start" xml:space="preserve">Total IN: 109.48k</text>
<text transform="translate(964.5,424.0) scale(1,1.1)" font-size="11.67" fill="#000" stroke="#000" stroke-width="0.05" text-anchor="start" xml:space="preserve">Total OUT:  25.43M</text>
<text transform="translate(915.5,438.0) scale(1,1.1)" font-size="11.67" fill="#000" stroke="#000" stroke-width="0.05" text-anchor="start" xml:space="preserve">95th Percentile ( 59.18k in+out)</text>
<text transform="translate(870.5,466.0) scale(1,1.1)" font-size="11.67" fill="#000" stroke="#000" stroke-width="0.05" text-anchor="start" xml:space="preserve">Now</text>
<text transform="translate(941.0,466.0) scale(1,1.1)" font-size="11.67" fill="#000" stroke="#000" stroke-width="0.05" text-anchor="start" xml:space="preserve">Avg</text>
<text transform="translate(996.5,466.0) scale(1,1.1)" font-size="11.67" fill="#000" stroke="#000" stroke-width="0.05" text-anchor="start" xml:space="preserve">Max</text>
<text transform="translate(702.5,480.0) scale(1,1.1)" font-size="11.67" fill="#000" stroke="#000" stroke-width="0.05" text-anchor="start" xml:space="preserve">#14 #8 INBOUND</text>
<text transform="translate(847.0,480.0) scale(1,1.1)" font-size="11.67" fill="#000" stroke="#000" stroke-width="0.05" text-anchor="start" xml:space="preserve">244.87</text>
<text transform="translate(911.5,480.0) scale(1,1.1)" font-size="11.67" fill="#000" stroke="#000" stroke-width="0.05" text-anchor="start" xml:space="preserve">243.30</text>
<text transform="translate(976.5,480.0) scale(1,1.1)" font-size="11.67" fill="#000" stroke="#000" stroke-width="0.05" text-anchor="start" xml:space="preserve">304.53</text>
<rect x="702" y="485.5" width="9" height="9" fill="#5a7a1f" stroke="#444" stroke-width="0.5"/>
<text transform="translate(716.5,494.0) scale(1,1.1)" font-size="11.67" fill="#000" stroke="#000" stroke-width="0.05" text-anchor="start" xml:space="preserve">Total INBOUND</text>
<text transform="translate(867.5,494.0) scale(1,1.1)" font-size="11.67" fill="#000" stroke="#000" stroke-width="0.05" text-anchor="start" xml:space="preserve">244.87</text>
<text transform="translate(932.5,494.0) scale(1,1.1)" font-size="11.67" fill="#000" stroke="#000" stroke-width="0.05" text-anchor="start" xml:space="preserve">243.30</text>
<text transform="translate(997.5,494.0) scale(1,1.1)" font-size="11.67" fill="#000" stroke="#000" stroke-width="0.05" text-anchor="start" xml:space="preserve">304.53</text>
<text transform="translate(702.5,508.0) scale(1,1.1)" font-size="11.67" fill="#000" stroke="#000" stroke-width="0.05" text-anchor="start" xml:space="preserve">#14 #8 OUTBOUND</text>
<text transform="translate(860.5,508.0) scale(1,1.1)" font-size="11.67" fill="#000" stroke="#000" stroke-width="0.05" text-anchor="start" xml:space="preserve">58.59k</text>
<text transform="translate(925.5,508.0) scale(1,1.1)" font-size="11.67" fill="#000" stroke="#000" stroke-width="0.05" text-anchor="start" xml:space="preserve">56.52k</text>
<text transform="translate(990.0,508.0) scale(1,1.1)" font-size="11.67" fill="#000" stroke="#000" stroke-width="0.05" text-anchor="start" xml:space="preserve">59.89k</text>
<rect x="702" y="513.5" width="9" height="9" fill="#62628f" stroke="#444" stroke-width="0.5"/>
<text transform="translate(716.5,522.0) scale(1,1.1)" font-size="11.67" fill="#000" stroke="#000" stroke-width="0.05" text-anchor="start" xml:space="preserve">Total OUTBOUND</text>
<text transform="translate(874.5,522.0) scale(1,1.1)" font-size="11.67" fill="#000" stroke="#000" stroke-width="0.05" text-anchor="start" xml:space="preserve">58.59k</text>
<text transform="translate(939.5,522.0) scale(1,1.1)" font-size="11.67" fill="#000" stroke="#000" stroke-width="0.05" text-anchor="start" xml:space="preserve">56.52k</text>
<text transform="translate(1004.5,522.0) scale(1,1.1)" font-size="11.67" fill="#000" stroke="#000" stroke-width="0.05" text-anchor="start" xml:space="preserve">59.89k</text>
<text transform="translate(1026.5,590.5) scale(1,1.1)" font-size="13.2" fill="#111" stroke="#111" stroke-width="0.05" text-anchor="middle" xml:space="preserve">Average Loads For Device</text>
<path d="M737.5,756.0V695.0H760.5V654.0H810.5V639.0H861.0V606.0H910.5V705.0H1010.5V708.0H1061.0V725.0H1110.5V699.0H1160.5V740.0H1210.5V694.0H1260.5V688.6H1310.5V756.0Z" fill="#dfe0ca"/>
<path d="M737.5,756.0V730.8H760.5V729.0H810.5V724.0H861.0V715.8H910.5V736.0H961.0V745.0H1061.0V751.0H1110.5V747.0H1160.5V755.0H1210.5V748.0H1260.5V746.0H1310.5V756.0Z" fill="#f08535"/>
<path d="M737.5,756.0V740.0H760.5V740.0H810.5V738.0H861.0V734.0H910.5V740.0H961.0V745.0H1061.0V751.0H1110.5V751.0H1160.5V755.0H1210.5V754.0H1260.5V754.0H1310.5V756.0Z" fill="#f86a00"/>
<path d="M750.5,604.5V758.5M770.5,604.5V758.5M790.5,604.5V758.5M830.5,604.5V758.5M850.5,604.5V758.5M870.5,604.5V758.5M890.5,604.5V758.5M930.5,604.5V758.5M950.5,604.5V758.5M970.5,604.5V758.5M990.5,604.5V758.5M1030.5,604.5V758.5M1050.5,604.5V758.5M1070.5,604.5V758.5M1090.5,604.5V758.5M1130.5,604.5V758.5M1150.5,604.5V758.5M1170.5,604.5V758.5M1190.5,604.5V758.5M1230.5,604.5V758.5M1250.5,604.5V758.5M1270.5,604.5V758.5M1290.5,604.5V758.5M1330.5,604.5V758.5" stroke="rgba(166,166,166,0.45)" stroke-width="1" stroke-dasharray="1,1" shape-rendering="crispEdges"/>
<path d="M734.0,645.5H1340.0M734.0,688.5H1340.0M734.0,710.5H1340.0M734.0,732.5H1340.0M734.0,753.5H1340.0" stroke="rgba(166,166,166,0.45)" stroke-width="1" stroke-dasharray="1,1" shape-rendering="crispEdges"/>
<path d="M810.5,604.5V758.5M910.5,604.5V758.5M1010.5,604.5V758.5M1110.5,604.5V758.5M1210.5,604.5V758.5M1310.5,604.5V758.5M734.0,624.5H1340.0M734.0,667.5H1340.0" stroke="rgba(255,150,150,0.75)" stroke-width="1" stroke-dasharray="1,1" shape-rendering="crispEdges"/>
<path d="M737.5,755.3H1310.5" stroke="#a04000" stroke-width="1.2"/>
<path d="M737.5,601.5V760.5 M733,756.5H1340" stroke="#555" stroke-width="1" shape-rendering="crispEdges"/>
<path d="M734.0,603.5 L737.5,598.5 L741.0,603.5 Z" fill="#555"/>
<path d="M1339,753.0 L1345,756.5 L1339,760.0 Z" fill="#555"/>
<text transform="translate(725.0,628.0) scale(1,1.1)" font-size="10.3" fill="#000" stroke="#000" stroke-width="0.22" text-anchor="start" xml:space="preserve">1</text>
<text transform="translate(725.0,671.0) scale(1,1.1)" font-size="10.3" fill="#000" stroke="#000" stroke-width="0.22" text-anchor="start" xml:space="preserve">1</text>
<text transform="translate(811.0,768.5) scale(1,1.1)" font-size="10.3" fill="#000" stroke="#000" stroke-width="0.22" text-anchor="middle" xml:space="preserve">08:50</text>
<text transform="translate(911.0,768.5) scale(1,1.1)" font-size="10.3" fill="#000" stroke="#000" stroke-width="0.22" text-anchor="middle" xml:space="preserve">09:00</text>
<text transform="translate(1011.0,768.5) scale(1,1.1)" font-size="10.3" fill="#000" stroke="#000" stroke-width="0.22" text-anchor="middle" xml:space="preserve">09:10</text>
<text transform="translate(1111.0,768.5) scale(1,1.1)" font-size="10.3" fill="#000" stroke="#000" stroke-width="0.22" text-anchor="middle" xml:space="preserve">09:20</text>
<text transform="translate(1211.0,768.5) scale(1,1.1)" font-size="10.3" fill="#000" stroke="#000" stroke-width="0.22" text-anchor="middle" xml:space="preserve">09:30</text>
<text transform="translate(1311.0,768.5) scale(1,1.1)" font-size="10.3" fill="#000" stroke="#000" stroke-width="0.22" text-anchor="middle" xml:space="preserve">09:40</text>
<text transform="translate(1356,578.0) rotate(90)" font-size="8.3" fill="#c4c4c4">RRDTOOL / TOBI OETIKER</text>
<text transform="translate(767.5,786.5) scale(1,1.1)" font-size="11.67" fill="#000" stroke="#000" stroke-width="0.05" text-anchor="start" xml:space="preserve">Avg</text>
<text transform="translate(818.5,786.5) scale(1,1.1)" font-size="11.67" fill="#000" stroke="#000" stroke-width="0.05" text-anchor="start" xml:space="preserve">Max</text>
<text transform="translate(884.0,786.5) scale(1,1.1)" font-size="11.67" fill="#000" stroke="#000" stroke-width="0.05" text-anchor="start" xml:space="preserve">Last</text>
<text transform="translate(702.5,800.5) scale(1,1.1)" font-size="11.67" fill="#000" stroke="#000" stroke-width="0.05" text-anchor="start" xml:space="preserve">1min</text>
<text transform="translate(767.5,800.5) scale(1,1.1)" font-size="11.67" fill="#000" stroke="#000" stroke-width="0.05" text-anchor="start" xml:space="preserve">0.80</text>
<text transform="translate(825.5,800.5) scale(1,1.1)" font-size="11.67" fill="#000" stroke="#000" stroke-width="0.05" text-anchor="start" xml:space="preserve">1.56</text>
<text transform="translate(884.0,800.5) scale(1,1.1)" font-size="11.67" fill="#000" stroke="#000" stroke-width="0.05" text-anchor="start" xml:space="preserve">0.80</text>
<text transform="translate(702.5,814.5) scale(1,1.1)" font-size="11.67" fill="#000" stroke="#000" stroke-width="0.05" text-anchor="start" xml:space="preserve">5min</text>
<text transform="translate(767.5,814.5) scale(1,1.1)" font-size="11.67" fill="#000" stroke="#000" stroke-width="0.05" text-anchor="start" xml:space="preserve">0.33</text>
<text transform="translate(825.5,814.5) scale(1,1.1)" font-size="11.67" fill="#000" stroke="#000" stroke-width="0.05" text-anchor="start" xml:space="preserve">0.55</text>
<text transform="translate(884.0,814.5) scale(1,1.1)" font-size="11.67" fill="#000" stroke="#000" stroke-width="0.05" text-anchor="start" xml:space="preserve">0.27</text>
<text transform="translate(702.5,828.5) scale(1,1.1)" font-size="11.67" fill="#000" stroke="#000" stroke-width="0.05" text-anchor="start" xml:space="preserve">15min</text>
<text transform="translate(767.5,828.5) scale(1,1.1)" font-size="11.67" fill="#000" stroke="#000" stroke-width="0.05" text-anchor="start" xml:space="preserve">0.27</text>
<text transform="translate(825.5,828.5) scale(1,1.1)" font-size="11.67" fill="#000" stroke="#000" stroke-width="0.05" text-anchor="start" xml:space="preserve">0.38</text>
<text transform="translate(884.0,828.5) scale(1,1.1)" font-size="11.67" fill="#000" stroke="#000" stroke-width="0.05" text-anchor="start" xml:space="preserve">0.20</text>
<text transform="translate(1026.5,896.5) scale(1,1.1)" font-size="13.2" fill="#111" stroke="#111" stroke-width="0.05" text-anchor="middle" xml:space="preserve">Ping Response</text>
<path d="M750.5,910.0V1064.5M770.5,910.0V1064.5M790.5,910.0V1064.5M830.5,910.0V1064.5M850.5,910.0V1064.5M870.5,910.0V1064.5M890.5,910.0V1064.5M930.5,910.0V1064.5M950.5,910.0V1064.5M970.5,910.0V1064.5M990.5,910.0V1064.5M1030.5,910.0V1064.5M1050.5,910.0V1064.5M1070.5,910.0V1064.5M1090.5,910.0V1064.5M1130.5,910.0V1064.5M1150.5,910.0V1064.5M1170.5,910.0V1064.5M1190.5,910.0V1064.5M1230.5,910.0V1064.5M1250.5,910.0V1064.5M1270.5,910.0V1064.5M1290.5,910.0V1064.5M1330.5,910.0V1064.5" stroke="rgba(166,166,166,0.45)" stroke-width="1" stroke-dasharray="1,1" shape-rendering="crispEdges"/>
<path d="M734.0,920.5H1340.0M734.0,939.5H1340.0M734.0,977.5H1340.0M734.0,996.5H1340.0M734.0,1016.5H1340.0M734.0,1035.5H1340.0" stroke="rgba(166,166,166,0.45)" stroke-width="1" stroke-dasharray="1,1" shape-rendering="crispEdges"/>
<path d="M810.5,910.0V1064.5M910.5,910.0V1064.5M1010.5,910.0V1064.5M1110.5,910.0V1064.5M1210.5,910.0V1064.5M1310.5,910.0V1064.5M734.0,958.5H1340.0M734.0,1054.5H1340.0" stroke="rgba(255,150,150,0.75)" stroke-width="1" stroke-dasharray="1,1" shape-rendering="crispEdges"/>
<path d="M737.5,907.0V1066.5 M733,1062.5H1340" stroke="#555" stroke-width="1" shape-rendering="crispEdges"/>
<path d="M734.0,909.0 L737.5,904.0 L741.0,909.0 Z" fill="#555"/>
<path d="M1339,1059.0 L1345,1062.5 L1339,1066.0 Z" fill="#555"/>
<path d="M737.5,996.6 L760.3,996.6 L761.0,1044.4 L810.0,1044.4 L811.0,1033.5 L860.6,1033.5 L861.3,1055.3 L910.4,1055.3 L911.2,912.4 L960.6,912.4 L961.3,1054.2 L1010.3,1054.2 L1011.0,1062.0 L1060.0,1062.0 L1061.0,980.5 L1110.0,980.5 L1111.0,973.6 L1160.5,973.6 L1161.2,1032.7 L1210.5,1032.7" fill="none" stroke="#f00" stroke-width="1.35"/>
<text transform="translate(725.0,962.0) scale(1,1.1)" font-size="10.3" fill="#000" stroke="#000" stroke-width="0.22" text-anchor="start" xml:space="preserve">3</text>
<text transform="translate(725.0,1058.0) scale(1,1.1)" font-size="10.3" fill="#000" stroke="#000" stroke-width="0.22" text-anchor="start" xml:space="preserve">2</text>
<text transform="translate(811.0,1074.5) scale(1,1.1)" font-size="10.3" fill="#000" stroke="#000" stroke-width="0.22" text-anchor="middle" xml:space="preserve">08:50</text>
<text transform="translate(911.0,1074.5) scale(1,1.1)" font-size="10.3" fill="#000" stroke="#000" stroke-width="0.22" text-anchor="middle" xml:space="preserve">09:00</text>
<text transform="translate(1011.0,1074.5) scale(1,1.1)" font-size="10.3" fill="#000" stroke="#000" stroke-width="0.22" text-anchor="middle" xml:space="preserve">09:10</text>
<text transform="translate(1111.0,1074.5) scale(1,1.1)" font-size="10.3" fill="#000" stroke="#000" stroke-width="0.22" text-anchor="middle" xml:space="preserve">09:20</text>
<text transform="translate(1211.0,1074.5) scale(1,1.1)" font-size="10.3" fill="#000" stroke="#000" stroke-width="0.22" text-anchor="middle" xml:space="preserve">09:30</text>
<text transform="translate(1311.0,1074.5) scale(1,1.1)" font-size="10.3" fill="#000" stroke="#000" stroke-width="0.22" text-anchor="middle" xml:space="preserve">09:40</text>
<text transform="translate(1356,883.0) rotate(90)" font-size="8.3" fill="#c4c4c4">RRDTOOL / TOBI OETIKER</text>
<text transform="translate(723.5,1092.0) scale(1,1.1)" font-size="11.67" fill="#000" stroke="#000" stroke-width="0.05" text-anchor="start" xml:space="preserve">Milliseconds</text>
<text transform="translate(864.0,1092.0) scale(1,1.1)" font-size="11.67" fill="#000" stroke="#000" stroke-width="0.05" text-anchor="start" xml:space="preserve">Now</text>
<text transform="translate(926.5,1092.0) scale(1,1.1)" font-size="11.67" fill="#000" stroke="#000" stroke-width="0.05" text-anchor="start" xml:space="preserve">Avg</text>
<text transform="translate(989.5,1092.0) scale(1,1.1)" font-size="11.67" fill="#000" stroke="#000" stroke-width="0.05" text-anchor="start" xml:space="preserve">Min</text>
<text transform="translate(1052.5,1092.0) scale(1,1.1)" font-size="11.67" fill="#000" stroke="#000" stroke-width="0.05" text-anchor="start" xml:space="preserve">Max</text>
<text transform="translate(865.0,1106.0) scale(1,1.1)" font-size="11.67" fill="#000" stroke="#000" stroke-width="0.05" text-anchor="start" xml:space="preserve">2.2</text>
<text transform="translate(929.5,1106.0) scale(1,1.1)" font-size="11.67" fill="#000" stroke="#000" stroke-width="0.05" text-anchor="start" xml:space="preserve">2.4</text>
<text transform="translate(992.5,1106.0) scale(1,1.1)" font-size="11.67" fill="#000" stroke="#000" stroke-width="0.05" text-anchor="start" xml:space="preserve">1.9</text>
<text transform="translate(1056.5,1106.0) scale(1,1.1)" font-size="11.67" fill="#000" stroke="#000" stroke-width="0.05" text-anchor="start" xml:space="preserve">3.5</text>
</svg>
</body></html>
